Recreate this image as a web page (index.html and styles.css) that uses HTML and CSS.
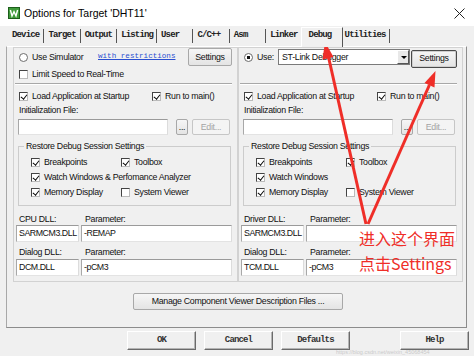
FILE: index.html
```html
<!DOCTYPE html>
<html lang="en">
<head>
<meta charset="utf-8">
<title>Options for Target 'DHT11'</title>
<link rel="stylesheet" href="styles.css">
</head>
<body>
<div class="window">
  <header class="titlebar">
    <svg class="app-icon" width="12" height="12" viewBox="0 0 12 12"><rect x="0.5" y="0.5" width="11" height="11" fill="#3f9a3a" stroke="#1d5e1b"/><path d="M2.4 3 L4 9 L6 4.6 L8 9 L9.6 3" fill="none" stroke="#fff" stroke-width="1.4"/></svg>
    <span class="title">Options for Target 'DHT11'</span>
    <svg class="close" width="11" height="11" viewBox="0 0 11 11"><path d="M0.5 0.5 L10.5 10.5 M10.5 0.5 L0.5 10.5" stroke="#222" stroke-width="1"/></svg>
  </header>
  <main class="dialog">
    <nav class="tabs">
      <span class="tab">Device</span>
      <span class="tab">Target</span>
      <span class="tab">Output</span>
      <span class="tab">Listing</span>
      <span class="tab">User</span>
      <span class="tab">C/C++</span>
      <span class="tab">Asm</span>
      <span class="tab">Linker</span>
      <span class="tab active">Debug</span>
      <span class="tab">Utilities</span>
    </nav>
    <section class="panel">
      <div class="cols">
        <div class="col">
          <div class="row r-top">
            <span class="opt w-sim"><i class="radio"></i>Use Simulator</span>
            <span class="link">with restrictions</span>
            <span class="btn settings">Settings</span>
          </div>
          <div class="row r-line"><span class="opt"><i class="check"></i>Limit Speed to Real-Time</span></div>
          <div class="sep"></div>
          <div class="row r-load"><span class="opt w-load"><i class="check on"></i>Load Application at Startup</span><span class="opt"><i class="check on"></i>Run to main()</span></div>
          <div class="row r-label">Initialization File:</div>
          <div class="row r-init"><span class="field init"></span><span class="btn dots">...</span><span class="btn disabled edit">Edit...</span></div>
          <fieldset class="group"><legend>Restore Debug Session Settings</legend>
            <div class="grid">
              <span class="opt"><i class="check on"></i>Breakpoints</span><span class="opt"><i class="check on"></i>Toolbox</span>
              <span class="opt span2"><i class="check on"></i>Watch Windows &amp; Perfomance Analyzer</span>
              <span class="opt"><i class="check on"></i>Memory Display</span><span class="opt"><i class="check"></i>System Viewer</span>
            </div>
          </fieldset>
          <div class="dll-labels"><span>CPU DLL:</span><span>Parameter:</span></div>
          <div class="dll-fields"><span class="field">SARMCM3.DLL</span><span class="field">-REMAP</span></div>
          <div class="dll-labels second"><span>Dialog DLL:</span><span>Parameter:</span></div>
          <div class="dll-fields"><span class="field">DCM.DLL</span><span class="field">-pCM3</span></div>
        </div>
        <div class="col">
          <div class="row r-top">
            <span class="opt w-use"><i class="radio on"></i>Use:</span>
            <span class="combo">ST-Link Debugger<span class="drop"></span></span>
            <span class="btn settings default">Settings</span>
          </div>
          <div class="row r-line"></div>
          <div class="sep"></div>
          <div class="row r-load"><span class="opt w-load"><i class="check on"></i>Load Application at Startup</span><span class="opt"><i class="check on"></i>Run to main()</span></div>
          <div class="row r-label">Initialization File:</div>
          <div class="row r-init"><span class="field init"></span><span class="btn dots">...</span><span class="btn disabled edit">Edit...</span></div>
          <fieldset class="group"><legend>Restore Debug Session Settings</legend>
            <div class="grid">
              <span class="opt"><i class="check on"></i>Breakpoints</span><span class="opt"><i class="check on"></i>Toolbox</span>
              <span class="opt span2"><i class="check on"></i>Watch Windows</span>
              <span class="opt"><i class="check on"></i>Memory Display</span><span class="opt"><i class="check"></i>System Viewer</span>
            </div>
          </fieldset>
          <div class="dll-labels"><span>Driver DLL:</span><span>Parameter:</span></div>
          <div class="dll-fields"><span class="field">SARMCM3.DLL</span><span class="field"></span></div>
          <div class="dll-labels second"><span>Dialog DLL:</span><span>Parameter:</span></div>
          <div class="dll-fields"><span class="field">TCM.DLL</span><span class="field">-pCM3</span></div>
        </div>
      </div>
      <div class="manage-row"><span class="btn manage">Manage Component Viewer Description Files ...</span></div>
    </section>
    <footer class="actions">
      <span class="cbtn">OK</span>
      <span class="cbtn">Cancel</span>
      <span class="cbtn">Defaults</span>
      <span class="cbtn help">Help</span>
    </footer>
  </main>
</div>
<div class="watermark">https://blog.csdn.net/weixin_45068454</div>
<svg class="annot" width="474" height="356" viewBox="0 0 474 356">
  <g fill="#ef2e28" stroke="#ef2e28">
    <line x1="366" y1="224" x2="328.5" y2="57" stroke-width="3"/>
    <polygon points="325,42 333.5,57 322.5,59.5" stroke="none"/>
    <line x1="368" y1="224" x2="429.4" y2="85" stroke-width="3"/>
    <polygon points="435.5,71 434.5,87.5 424.5,83" stroke="none"/>
  </g>
</svg>
<div class="note">进入这个界面<br>点击Settings</div>
</body>
</html>
```
FILE: styles.css
```css
* { box-sizing: border-box; margin: 0; padding: 0; }
html, body { width: 474px; height: 356px; overflow: hidden; }
body {
  position: relative;
  background: #f0f0f0;
  font-family: "Liberation Sans", Arial, sans-serif;
  font-size: 8.8px;
  letter-spacing: -0.3px;
  color: #111;
  line-height: 1;
}
.window { display: flex; flex-direction: column; height: 356px; }

.titlebar {
  flex: none;
  height: 26px;
  background: #fff;
  display: flex;
  align-items: center;
  padding: 0 8px;
}
.app-icon { flex: none; margin-right: 4px; }
.title { font-size: 10.5px; letter-spacing: 0; color: #000; }
.close { margin-left: auto; margin-right: 1px; }

.dialog { flex: 1; display: flex; flex-direction: column; padding: 0 7px 0 6px; }

.tabs {
  display: flex;
  align-items: flex-end;
  height: 20px;
  padding-left: 2px;
  position: relative;
  z-index: 1;
}
.tab {
  font-family: "Liberation Mono", monospace;
  font-weight: bold;
  font-size: 9px;
  letter-spacing: -0.85px;
  color: #222;
  min-width: 36.4px;
  height: 14px;
  line-height: 13px;
  padding: 0 3px 0 4px;
  border-right: 1px solid #555;
  margin-bottom: 3px;
}
.tab.active {
  height: 20px;
  line-height: 14px;
  margin: 0 -2px -1px -2px;
  padding: 0 4px 0 7px;
  min-width: 42px;
  background: #f0f0f0;
  border-left: 1px solid #fff;
  border-top: 1px solid #fff;
  border-right: 1px solid #555;
  position: relative;
}

.panel {
  height: 282px;
  border: 1px solid;
  border-color: #fff #8c8c8c #8c8c8c #a8a8a8;
  display: flex;
  flex-direction: column;
}
.cols {
  display: grid;
  grid-template-columns: 225px 225px;
  padding-left: 6px;
}
.col {
  border: 1px solid #d2d2d2;
  padding: 0 5px 5px 5px;
  display: flex;
  flex-direction: column;
}

.row { display: flex; align-items: center; }
.r-top { height: 18px; }
.r-line { height: 14px; margin-top: 1px; }
.r-load { height: 14px; margin-top: 4px; }
.r-label { height: 12px; margin-top: 1px; }
.r-init { height: 16px; margin-top: 3px; }

.sep {
  height: 2px;
  margin: 2px 0 0 -4px;
  border-top: 1px solid #a8a8a8;
  border-bottom: 1px solid #fff;
}

.opt { display: flex; align-items: center; gap: 4px; white-space: nowrap; }
.w-sim { width: 79px; }
.w-use { width: 34px; }
.w-load { width: 133px; }

.radio {
  flex: none;
  width: 9px; height: 9px;
  border-radius: 50%;
  border: 1px solid #6d6d6d;
  background: #fff;
}
.radio.on { background: radial-gradient(circle, #111 0 1.5px, #fff 2px); }

.check {
  flex: none;
  position: relative;
  width: 9px; height: 9px;
  border: 1px solid;
  border-color: #444 #bbb #bbb #444;
  background: #fff;
}
.check.on::after {
  content: "";
  position: absolute;
  left: 2px; top: 0;
  width: 2.5px; height: 5px;
  border: solid #000;
  border-width: 0 1.6px 1.6px 0;
  transform: rotate(38deg);
}

.link {
  font-family: "Liberation Mono", monospace;
  font-size: 7.6px;
  letter-spacing: 0;
  color: #2a4fd0;
  text-decoration: underline;
}

.btn {
  display: flex;
  align-items: center;
  justify-content: center;
  border: 1px solid #a8a8a8;
  border-radius: 2px;
  background: linear-gradient(#f6f6f6, #e4e4e4);
  color: #111;
  white-space: nowrap;
}
.settings { margin-left: auto; width: 44px; height: 18px; }
.settings.default { width: 46px; height: 18px; margin-top: 3px; border: 1px solid #4a4a4a; box-shadow: inset 0 0 0 1px #cfcfcf; }
.dots { width: 12px; height: 16px; margin-left: 8px; }
.edit { width: 38px; height: 16px; margin-left: 4px; }
.btn.disabled { color: #a4a4a4; border-color: #c6c6c6; background: #f4f4f4; }

.combo {
  display: flex;
  align-items: center;
  width: 132px;
  height: 16px;
  padding-left: 3px;
  background: #fff;
  border: 1px solid #7a7a7a;
}
.drop {
  margin-left: auto;
  width: 12px;
  height: 14px;
  border: 1px solid;
  border-color: #fff #555 #555 #fff;
  background: #e8e8e8;
  position: relative;
}
.drop::after {
  content: "";
  position: absolute;
  left: 2.5px; top: 5px;
  border-left: 3px solid transparent;
  border-right: 3px solid transparent;
  border-top: 3px solid #000;
}

.field {
  display: flex;
  align-items: center;
  background: #fff;
  border: 1px solid;
  border-color: #9a9a9a #dcdcdc #e3e3e3 #a8a8a8;
  padding-left: 2px;
  letter-spacing: -0.45px;
  white-space: nowrap;
  overflow: hidden;
}
.init { width: 150px; height: 16px; margin-left: -1px; }

.group {
  margin: 6px 1px 0 -1px;
  border: 1px solid #cccccc;
  padding: 0;
}
.group legend {
  margin-left: 5px;
  padding: 0 2px;
  line-height: 10px;
}
.grid {
  display: grid;
  grid-template-columns: 90px auto;
  grid-auto-rows: 15px;
  align-items: center;
  padding: 4px 0 5px 12px;
}
.span2 { grid-column: 1 / -1; }

.dll-labels {
  display: grid;
  grid-template-columns: 64px 1fr;
  height: 12px;
  align-items: center;
  margin-top: 7px;
}
.dll-labels span:last-child { padding-left: 2px; }
.dll-labels.second { margin-top: 4px; }
.dll-fields {
  display: grid;
  grid-template-columns: 63px 1fr;
  column-gap: 2px;
  height: 17px;
  margin-left: -3px;
}
.dll-labels.second + .dll-fields { margin-top: 1px; }

.manage-row { display: flex; justify-content: center; margin-top: 11px; padding-left: 3px; }
.manage { width: 210px; height: 17px; }

.actions {
  display: flex;
  gap: 8px;
  height: 19px;
  margin-top: 3px;
  padding-left: 121px;
  margin-right: -2px;
}
.cbtn {
  display: flex;
  align-items: center;
  justify-content: center;
  width: 69px;
  height: 19px;
  font-family: "Liberation Mono", monospace;
  font-weight: bold;
  font-size: 9px;
  letter-spacing: -0.85px;
  color: #333;
  background: #f0f0f0;
  border: 1px solid;
  border-color: #fff #6a6a6a #6a6a6a #fff;
  box-shadow: inset -1px -1px 0 #b4b4b4;
}
.help { margin-left: auto; }

.watermark {
  position: absolute;
  left: 336px;
  top: 350px;
  font-size: 5.5px;
  letter-spacing: 0;
  color: rgba(160, 160, 160, 0.5);
}
.annot { position: absolute; left: 0; top: 0; pointer-events: none; }
.note {
  position: absolute;
  left: 359px;
  top: 226px;
  font-family: "Noto Sans CJK SC", "Noto Sans", sans-serif;
  font-size: 16px;
  line-height: 25px;
  letter-spacing: 0;
  color: #ef2e28;
}
```
